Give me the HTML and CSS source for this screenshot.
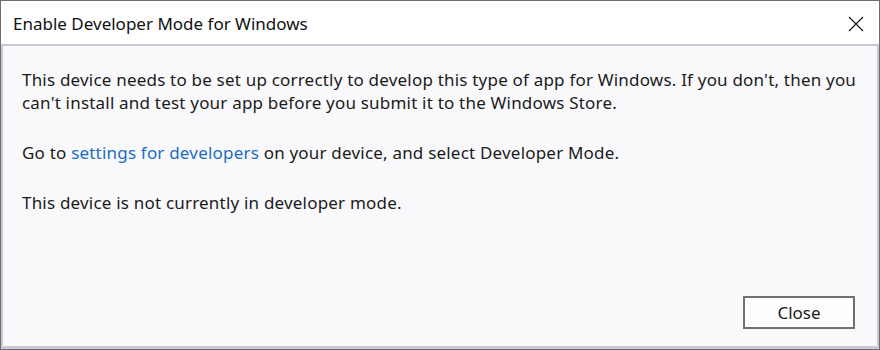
FILE: index.html
```html
<!DOCTYPE html>
<html lang="en">
<head>
    <meta charset="UTF-8">
    <title>Enable Developer Mode for Windows</title>
    <link rel="stylesheet" href="styles.css">
</head>
<body>
    <div class="dialog">
        <div class="dialog-title">
            <span class="title-text">Enable Developer Mode for Windows</span>
            <button class="title-close" aria-label="Close">
                <svg width="16" height="16" viewBox="0 0 16 16">
                    <path d="M1 1 L15 15 M15 1 L1 15" stroke="#111" stroke-width="1.1" fill="none"/>
                </svg>
            </button>
        </div>
        <div class="dialog-body">
            <div class="dialog-text">
                <p>This device needs to be set up correctly to develop this type of app for Windows. If you don't, then you can't install and test your app before you submit it to the Windows Store.</p>
                <p>Go to <a href="#">settings for developers</a> on your device, and select Developer Mode.</p>
                <p>This device is not currently in developer mode.</p>
            </div>
            <div class="dialog-buttons">
                <button class="dialog-button">Close</button>
            </div>
        </div>
    </div>
</body>
</html>
```

FILE: styles.css
```css
* {
    margin: 0;
    padding: 0;
    box-sizing: border-box;
}

body {
    font-family: "Noto Sans", "Open Sans", sans-serif;
    background-color: #ffffff;
    width: 880px;
    height: 350px;
}

.dialog {
    width: 880px;
    height: 350px;
    border: 1px solid #6e6e6e;
    display: flex;
    flex-direction: column;
    background: #ffffff;
}

.dialog-title {
    height: 43px;
    display: flex;
    align-items: center;
    justify-content: space-between;
    padding-left: 12px;
    padding-right: 15px;
    background: #ffffff;
}

.title-text {
    font-size: 17px;
    color: #111;
    margin-top: 1px;
}

.title-close {
    border: none;
    background: none;
    width: 16px;
    height: 16px;
    display: flex;
    margin-top: 2px;
}

.dialog-body {
    flex: 1;
    background: #f9f9fb;
    border: 2px solid #c9c9d7;
    border-bottom-width: 3px;
    display: flex;
    flex-direction: column;
    justify-content: space-between;
    padding: 22px 8px 17px 19px;
}

.dialog-text p {
    font-size: 17px;
    line-height: 23px;
    letter-spacing: 0.2px;
    color: #1b1b1b;
    margin-bottom: 27px;
}

.dialog-text a {
    color: #1a6dc2;
    text-decoration: none;
}

.dialog-buttons {
    display: flex;
    justify-content: flex-end;
    padding-right: 14px;
}

.dialog-button {
    width: 112px;
    height: 33px;
    border: 2px solid #707070;
    background: #fdfdfd;
    font-family: inherit;
    font-size: 17px;
    color: #1b1b1b;
}
```
